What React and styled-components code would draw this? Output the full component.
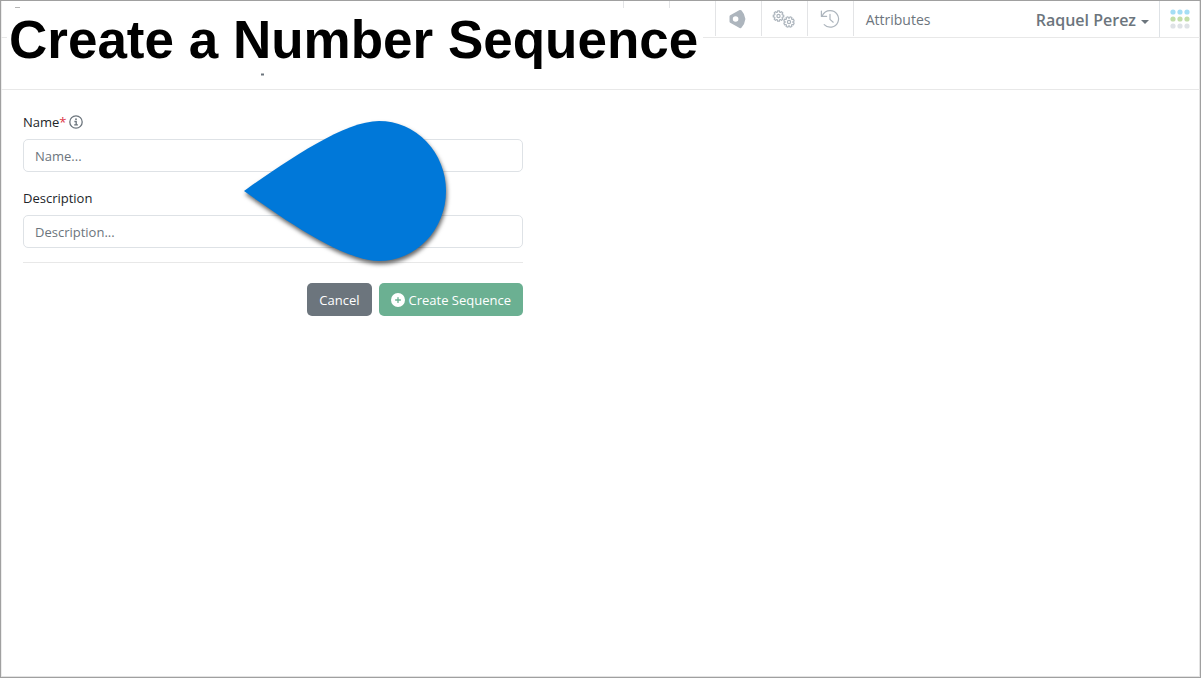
import { FaCirclePlus } from "react-icons/fa6";
import styled, { createGlobalStyle } from "styled-components";

const GlobalStyle = createGlobalStyle`
    * {
        box-sizing: border-box;
    }

    body {
        margin: 0;
        background-color: #fff;
        color: #212529;
        font-family: "Open Sans", "Noto Sans", sans-serif;
        font-size: 13px;
    }
`;

const Page = styled.div`
    position: relative;
    min-height: 100vh;
    border: 1px solid #a0a0a0;
    box-shadow: inset -1px -1px 0 #e3e3e3, inset 1px 0 0 #ededed;
`;

const TopBar = styled.header`
    display: flex;
    justify-content: flex-end;
    height: 37px;
    border-bottom: 1px solid #e8e8e8;
`;

const IconLink = styled.a`
    display: flex;
    align-items: center;
    justify-content: center;
    width: 46px;
    height: 35px;
    border-left: 1px solid #e3e4e6;
    color: #adb5bd;
`;

const Section = styled.a`
    flex: 0 1 183px;
    height: 35px;
    padding-left: 12px;
    border-left: 1px solid #e3e4e6;
    color: #6c757d;
    font-size: 14px;
    line-height: 38px;
    text-decoration: none;
`;

const UserButton = styled.button`
    display: flex;
    align-items: center;
    gap: 5px;
    padding: 2px 10px 0 0;
    border: 0;
    background-color: transparent;
    color: #6c757d;
    font-family: inherit;
    font-size: 16px;
    font-weight: 600;
`;

const Caret = styled.span`
    margin-top: 4px;
    border: 4px solid transparent;
    border-top-color: #6c757d;
    border-bottom: 0;
`;

const AppsButton = styled.button`
    display: flex;
    align-items: center;
    justify-content: center;
    width: 41px;
    height: 36px;
    padding: 0;
    border: 0;
    border-left: 1px solid #dee2e6;
    background-color: transparent;
`;

const SubBar = styled.div`
    height: 52px;
    border-bottom: 1px solid #e8e8e8;
`;

const Banner = styled.h1`
    position: absolute;
    top: 7px;
    left: 6px;
    margin: 0;
    padding: 0 5px 0 2px;
    background-color: #fff;
    color: #000;
    font-family: "Liberation Sans", Arial, sans-serif;
    font-size: 53px;
    line-height: 64px;
    white-space: nowrap;
`;

const Form = styled.form`
    display: flex;
    flex-direction: column;
    width: 100%;
    max-width: 544px;
    padding: 20px 22px;
`;

const Label = styled.label`
    display: flex;
    align-items: center;
    height: 20px;
    margin: 2px 0 7px;
`;

const Required = styled.span`
    margin-right: 2px;
    color: #dc3545;
`;

const Input = styled.input`
    height: 33px;
    margin-bottom: 14px;
    padding: 0 11px;
    border: 1px solid #dee2e6;
    border-radius: 5px;
    background-color: #fff;
    color: #212529;
    font-family: inherit;
    font-size: 13px;

    &::placeholder {
        color: #6c757d;
        opacity: 1;
    }
`;

const Actions = styled.div`
    display: flex;
    justify-content: flex-end;
    gap: 7px;
    padding-top: 20px;
    border-top: 1px solid #e8e8e8;
`;

const Button = styled.button`
    display: flex;
    align-items: center;
    gap: 4px;
    height: 33px;
    padding: 0 12px;
    border: 0;
    border-radius: 5px;
    background-color: ${({ $color }) => $color};
    color: #fff;
    font-family: inherit;
    font-size: 13px;
`;

const Drop = styled.svg`
    position: absolute;
    top: 109px;
    left: 233px;
    pointer-events: none;
    filter: drop-shadow(1px 3px 2px rgba(0, 0, 0, 0.6));
`;

const Specks = styled.svg`
    position: absolute;
    top: 0;
    left: 0;
    pointer-events: none;
`;

function gear(cx, cy, turn) {
    const points = [];
    for (let i = 0; i < 8; i++) {
        const start = turn + i * Math.PI / 4;
        [[-0.28, 4], [-0.18, 5.3], [0.18, 5.3], [0.28, 4]].forEach(([a, r]) => {
            points.push(`${cx + r * Math.cos(start + a)} ${cy + r * Math.sin(start + a)}`);
        });
    }
    return `M${points.join("L")}Z`;
}

function GearsIcon() {
    return <svg width="24" height="20" viewBox="0 0 24 20" fill="none" stroke="currentColor" strokeWidth="1.2" strokeLinejoin="round">
        <path d={gear(6.5, 7, 0)}/>
        <circle cx="6.5" cy="7" r="1.6"/>
        <path d={gear(17, 13, Math.PI / 8)}/>
        <circle cx="17" cy="13" r="1.6"/>
    </svg>;
}

function HistoryIcon() {
    return <svg width="20" height="20" viewBox="0 0 20 20" fill="none" stroke="currentColor" strokeWidth="1.2" strokeLinecap="round" strokeLinejoin="round">
        <path d="M2 7.2C3.5 3.8 6.5 1.6 10.2 1.6a8.3 8.3 0 1 1-6 14"/>
        <path d="M1.4 2v5.4h5.2M10 5.4v5l3.2 2.8"/>
    </svg>;
}

function HubIcon() {
    return <svg width="20" height="20" viewBox="0 0 20 20">
        <path fill="currentColor" fillRule="evenodd" d="M2.2 6.2 11.6 1.1q1.2-.6 2 .4Q16.800 5 17.400 10q-.6 5-3.800 8.500-.8 1-2 .4L2.200 13.800q-.7-.4-.7-1.200V7.400q0-.8.700-1.200ZM7.600 7.200a2.800 2.800 0 1 0 0 5.600 2.800 2.800 0 0 0 0-5.600Z"/>
    </svg>;
}

function InfoIcon() {
    return <svg width="14" height="14" viewBox="0 0 14 14" fill="none" stroke="#6c757d" strokeWidth="1.3">
        <circle cx="7" cy="7" r="6.2"/>
        <path d="M5.400 6.500H7.200V9.800M5.200 9.900H8.900"/>
        <circle cx="7" cy="4.200" r=".9" fill="#6c757d" stroke="none"/>
    </svg>;
}

function AppsIcon() {
    return <svg width="20" height="20" viewBox="0 0 20 20">
        {["#a5def5", "#c3deaa", "#dee2e6"].map((color, row) =>
            [0, 1, 2].map(col =>
                <circle key={color + col} cx={3 + col * 7} cy={3 + row * 7} r="2.6" fill={color}/>
            )
        )}
    </svg>;
}

function App() {
    return <Page>
        <GlobalStyle/>
        <TopBar>
            <IconLink href="#"/>
            <IconLink href="#"/>
            <IconLink href="#" aria-label="Hub"><HubIcon/></IconLink>
            <IconLink href="#" aria-label="Settings"><GearsIcon/></IconLink>
            <IconLink href="#" aria-label="History"><HistoryIcon/></IconLink>
            <Section href="#">Attributes</Section>
            <UserButton type="button">Raquel Perez<Caret/></UserButton>
            <AppsButton type="button" aria-label="Apps"><AppsIcon/></AppsButton>
        </TopBar>
        <SubBar/>
        <Form>
            <Label htmlFor="name">Name<Required>*</Required><InfoIcon/></Label>
            <Input id="name" placeholder="Name..."/>
            <Label htmlFor="description">Description</Label>
            <Input id="description" placeholder="Description..."/>
            <Actions>
                <Button type="button" $color="#6c757d">Cancel</Button>
                <Button type="button" $color="#6bb092"><FaCirclePlus size={14}/>Create Sequence</Button>
            </Actions>
        </Form>
        <Banner>Create a Number Sequence</Banner>
        <Specks width="270" height="80" aria-hidden="true">
            <path d="M14 6.500h5" stroke="#b4b4b4"/>
            <path d="M260 73.500h3" stroke="#6c757d" strokeWidth="2"/>
        </Specks>
        <Drop width="216" height="160" viewBox="234 110 216 160" aria-hidden="true">
            <path fill="#0078d9" d="M244 191C289 159 345 121 379 121A67 70 0 0 1 379 261C345 261 289 223 244 191Z"/>
        </Drop>
    </Page>;
}

export default App;
